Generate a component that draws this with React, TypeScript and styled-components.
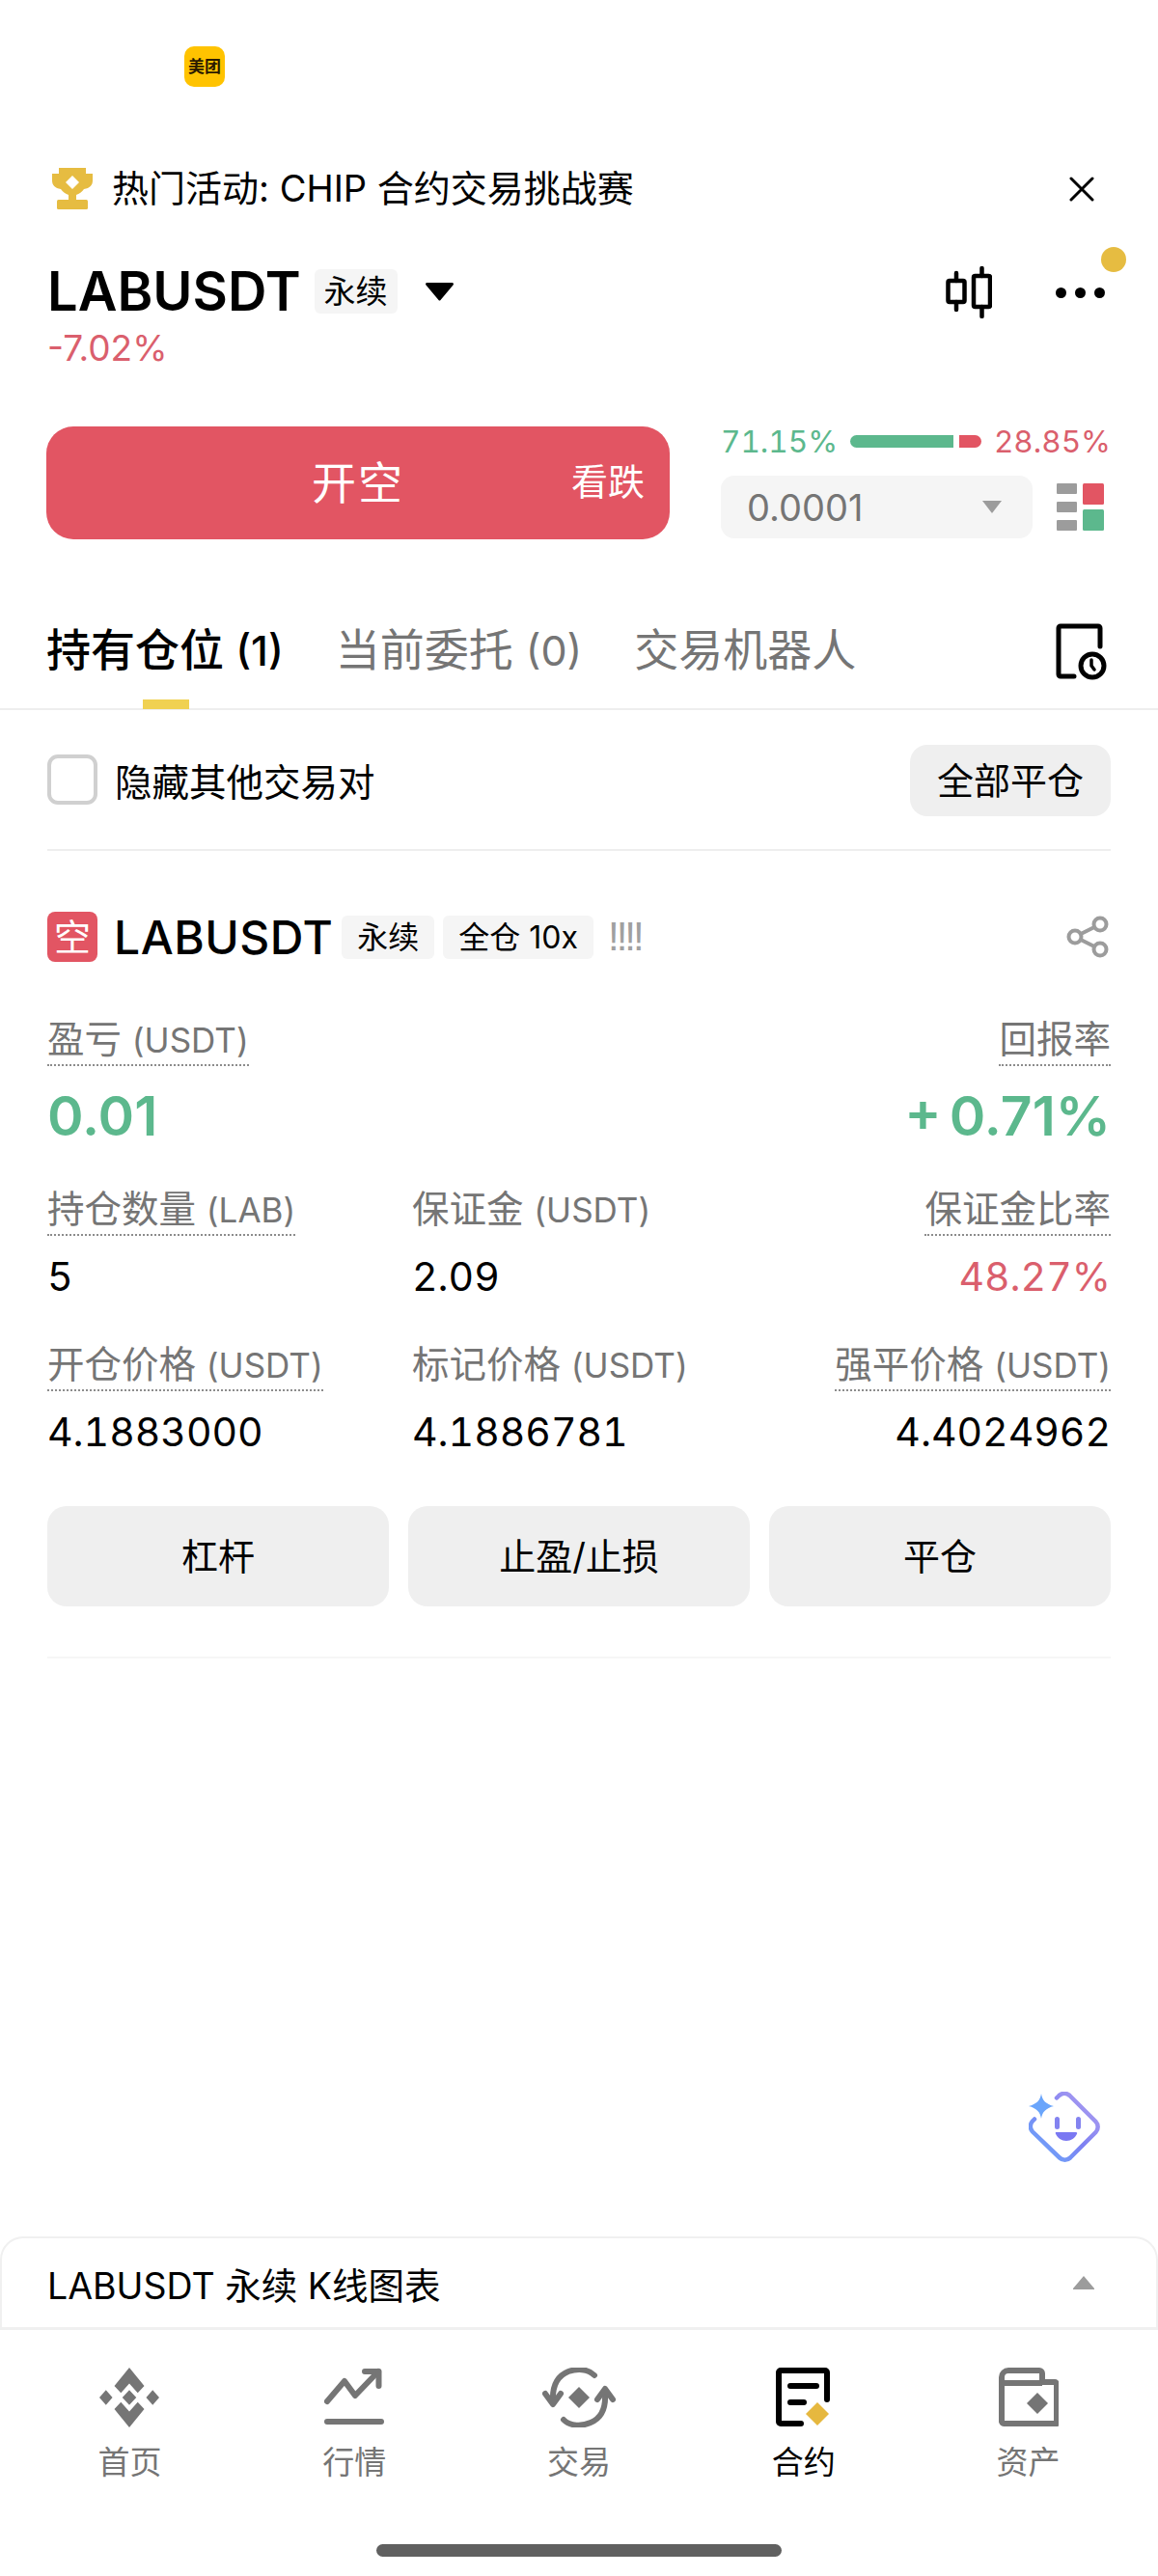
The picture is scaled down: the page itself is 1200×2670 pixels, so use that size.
import * as React from "react";
import styled, { createGlobalStyle } from "styled-components";

const GlobalStyle = createGlobalStyle`
    html, body {
        margin: 0;
        padding: 0;
        background: #fff;
    }
    body {
        font-family: "Inter", "Noto Sans CJK SC", sans-serif;
        color: #000;
    }
    * {
        box-sizing: border-box;
    }
`;

const GREEN = "#5cb88d";
const RED = "#e25563";
const RED_TEXT = "#da5f6d";
const GREY_TEXT = "#757575";
const ICON_GREY = "#9c9c9c";

const App: React.FC = () => {
    return (
        <>
            <GlobalStyle />
            <Page>
                <StatusBar>
                    <AppBadge>美团</AppBadge>
                </StatusBar>

                <PromoRow>
                    <TrophyIcon />
                    <PromoText>热门活动: CHIP 合约交易挑战赛</PromoText>
                    <CloseIcon />
                </PromoRow>

                <SymbolRow>
                    <SymbolBlock>
                        <SymbolLine>
                            <SymbolName>LABUSDT</SymbolName>
                            <Tag>永续</Tag>
                            <Caret viewBox="0 0 29 19">
                                <path d="M1.5 0h26a1.4 1.4 0 0 1 1 2.4L15.5 18a1.4 1.4 0 0 1-2 0L.5 2.4A1.4 1.4 0 0 1 1.5 0z" fill="#000" />
                            </Caret>
                        </SymbolLine>
                        <ChangeText>-7.02%</ChangeText>
                    </SymbolBlock>
                    <SymbolActions>
                        <CandleIcon />
                        <MoreWrap>
                            <MoreDot />
                            <MoreDot />
                            <MoreDot />
                            <NoticeDot />
                        </MoreWrap>
                    </SymbolActions>
                </SymbolRow>

                <TradeRow>
                    <SellButton>
                        <SellLabel>开空</SellLabel>
                        <SellHint>看跌</SellHint>
                    </SellButton>
                    <DepthColumn>
                        <RatioRow>
                            <RatioText $color={GREEN}>71.15%</RatioText>
                            <RatioBar>
                                <RatioGreen />
                                <RatioRed />
                            </RatioBar>
                            <RatioText $color={RED_TEXT}>28.85%</RatioText>
                        </RatioRow>
                        <PrecisionRow>
                            <PrecisionSelect>
                                <PrecisionValue>0.0001</PrecisionValue>
                                <SmallCaret viewBox="0 0 20 13">
                                    <path d="M0 0h20L10 13z" fill={ICON_GREY} />
                                </SmallCaret>
                            </PrecisionSelect>
                            <BookIcon />
                        </PrecisionRow>
                    </DepthColumn>
                </TradeRow>

                <TabBar>
                    <Tab $active>
                        持有仓位 <TabCount>(1)</TabCount>
                        <TabMarker />
                    </Tab>
                    <Tab>
                        当前委托 <TabCount>(0)</TabCount>
                    </Tab>
                    <Tab>交易机器人</Tab>
                    <HistoryIcon />
                </TabBar>

                <FilterRow>
                    <CheckLabel>
                        <CheckBox />
                        隐藏其他交易对
                    </CheckLabel>
                    <CloseAllButton>全部平仓</CloseAllButton>
                </FilterRow>

                <PositionCard>
                    <PositionHead>
                        <SideBadge>空</SideBadge>
                        <PositionName>LABUSDT</PositionName>
                        <PositionTag>永续</PositionTag>
                        <PositionTag>全仓 10x</PositionTag>
                        <Warnings>!!!!</Warnings>
                        <ShareIcon />
                    </PositionHead>

                    <PnlRow>
                        <Metric>
                            <MetricLabel $dotted>
                                盈亏 <Unit>(USDT)</Unit>
                            </MetricLabel>
                            <BigNumber>0.01</BigNumber>
                        </Metric>
                        <Metric $right>
                            <MetricLabel $dotted>回报率</MetricLabel>
                            <BigNumber>+ 0.71%</BigNumber>
                        </Metric>
                    </PnlRow>

                    <MetricGrid>
                        <Metric>
                            <MetricLabel $dotted>
                                持仓数量 <Unit>(LAB)</Unit>
                            </MetricLabel>
                            <MetricValue>5</MetricValue>
                        </Metric>
                        <Metric>
                            <MetricLabel>
                                保证金 <Unit>(USDT)</Unit>
                            </MetricLabel>
                            <MetricValue>2.09</MetricValue>
                        </Metric>
                        <Metric $right>
                            <MetricLabel $dotted>保证金比率</MetricLabel>
                            <MetricValue $color={RED_TEXT}>48.27%</MetricValue>
                        </Metric>
                        <Metric>
                            <MetricLabel $dotted>
                                开仓价格 <Unit>(USDT)</Unit>
                            </MetricLabel>
                            <MetricValue>4.1883000</MetricValue>
                        </Metric>
                        <Metric>
                            <MetricLabel>
                                标记价格 <Unit>(USDT)</Unit>
                            </MetricLabel>
                            <MetricValue>4.1886781</MetricValue>
                        </Metric>
                        <Metric $right>
                            <MetricLabel $dotted>
                                强平价格 <Unit>(USDT)</Unit>
                            </MetricLabel>
                            <MetricValue>4.4024962</MetricValue>
                        </Metric>
                    </MetricGrid>

                    <ActionRow>
                        <ActionButton>杠杆</ActionButton>
                        <ActionButton>止盈/止损</ActionButton>
                        <ActionButton>平仓</ActionButton>
                    </ActionRow>
                </PositionCard>

                <AssistantIcon />

                <Footer>
                    <ChartBar>
                        <ChartTitle>LABUSDT 永续 K线图表</ChartTitle>
                        <ChartCaret viewBox="0 0 22 14">
                            <path d="M11 0l11 13a.6.6 0 0 1-.5 1H.5a.6.6 0 0 1-.5-1z" fill={ICON_GREY} />
                        </ChartCaret>
                    </ChartBar>
                    <NavBar>
                        <NavItem>
                            <HomeIcon />
                            首页
                        </NavItem>
                        <NavItem>
                            <MarketIcon />
                            行情
                        </NavItem>
                        <NavItem>
                            <TradeIcon />
                            交易
                        </NavItem>
                        <NavItem $active>
                            <ContractIcon />
                            合约
                        </NavItem>
                        <NavItem>
                            <WalletIcon />
                            资产
                        </NavItem>
                    </NavBar>
                    <HomeIndicator />
                </Footer>
            </Page>
        </>
    );
};

const TrophyIcon = () => (
    <TrophySvg viewBox="0 0 42 43">
        <path
            d="M7 0h28v6h7v7c0 5-3 8-9 9-2 3-5 5-8 6v6H17v-6c-3-1-6-3-8-6-6-1-9-4-9-9V6h7z"
            fill="#e6bc41"
        />
        <rect x="5" y="33" width="32" height="10" rx="1.500" fill="#e6bc41" />
        <path d="M21 8l7 7-7 7-7-7z" fill="#fff" />
    </TrophySvg>
);

const CloseIcon = () => (
    <CloseSvg viewBox="0 0 26 26">
        <path d="M2 2l22 22M24 2L2 24" stroke="#000" strokeWidth="3" strokeLinecap="round" />
    </CloseSvg>
);

const CandleIcon = () => (
    <CandleSvg viewBox="0 0 48 54" fill="none" stroke="#000" strokeWidth="4.500" strokeLinecap="round" strokeLinejoin="round">
        <rect x="2.500" y="15" width="17" height="22" rx="1.500" />
        <path d="M11 7v8M11 37v8" />
        <rect x="29" y="10" width="17" height="32" rx="1.500" />
        <path d="M37.500 2v8M37.500 42v10" />
    </CandleSvg>
);

const BookIcon = () => (
    <BookSvg viewBox="0 0 49 49">
        <rect x="0" y="0" width="21" height="11" rx="1" fill={ICON_GREY} />
        <rect x="0" y="19" width="21" height="11" rx="1" fill={ICON_GREY} />
        <rect x="0" y="38" width="21" height="11" rx="1" fill={ICON_GREY} />
        <rect x="27" y="0" width="22" height="22" rx="1.500" fill={RED} />
        <rect x="27" y="27" width="22" height="22" rx="1.500" fill={GREEN} />
    </BookSvg>
);

const HistoryIcon = () => (
    <HistorySvg viewBox="0 0 54 60" fill="none" stroke="#000" strokeWidth="5" strokeLinecap="round" strokeLinejoin="round">
        <path d="M20 56H6a2 2 0 0 1-2-2V6a2 2 0 0 1 2-2h39a2 2 0 0 1 2 2v19" />
        <circle cx="39" cy="45" r="12" />
        <path d="M38 39v6l3 4" strokeWidth="3.500" />
    </HistorySvg>
);

const ShareIcon = () => (
    <ShareSvg viewBox="0 0 44 44" fill="none" stroke={ICON_GREY} strokeWidth="4">
        <circle cx="35" cy="9" r="6.500" />
        <circle cx="9" cy="22" r="6.500" />
        <circle cx="35" cy="35" r="6.500" />
        <path d="M15 19l14-7M15 25l14 7" />
    </ShareSvg>
);

const AssistantIcon = () => (
    <AssistantSvg viewBox="0 0 74 74" fill="none">
        <defs>
            <linearGradient id="botRing" x1="0" y1="1" x2="1" y2="0">
                <stop offset="0" stopColor="#6aaefc" />
                <stop offset="0.5" stopColor="#7d80f2" />
                <stop offset="1" stopColor="#b6a3f0" />
            </linearGradient>
        </defs>
        <path
            d="M29 6.500l2.500-2.500a8 8 0 0 1 11 0l27 27a8 8 0 0 1 0 11L43 68.500a8 8 0 0 1-11 0L4 41.500a8 8 0 0 1 0-11l2-2"
            stroke="url(#botRing)"
            strokeWidth="4.500"
            strokeLinecap="round"
        />
        <path d="M13 2c1 7 5 11 13 13-8 2-12 6-13 13-1-7-5-11-13-13 8-2 12-6 13-13z" fill="#6aa5fb" />
        <rect x="27" y="26" width="5" height="13" rx="2.500" fill="#8383f0" />
        <rect x="49" y="26" width="5" height="13" rx="2.500" fill="#8383f0" />
        <path d="M28 42h21c1 0 1.500.8 1 1.800C48 48 44 51 39 51s-9-3-11-7.200c-.5-1 0-1.800 0-1.800z" fill="#7a78f2" />
    </AssistantSvg>
);

const HomeIcon = () => (
    <NavSvg viewBox="0 0 64 64" fill={GREY_TEXT}>
        <path d="M32 0l16 19.500-7 7.500-9-10-9 10-7-7.500z" />
        <path d="M32 64L16 44.500l7-7.500 9 10 9-10 7 7.500z" />
        <path d="M32 24l7.500 8-7.500 8-7.500-8z" />
        <path d="M7 24l7 8-7 8-7-8z" />
        <path d="M57 24l7 8-7 8-7-8z" />
    </NavSvg>
);

const MarketIcon = () => (
    <NavSvg viewBox="0 0 62 62" fill="none" stroke={GREY_TEXT} strokeWidth="6" strokeLinecap="round" strokeLinejoin="round">
        <path d="M3 35l18-21 11 15 24-25" />
        <path d="M42 4h14.500v15" />
        <path d="M3 56h56" />
    </NavSvg>
);

const TradeIcon = () => (
    <NavSvg viewBox="0 0 76 62" fill="none" stroke={GREY_TEXT} strokeWidth="6" strokeLinecap="round" strokeLinejoin="round">
        <path d="M54 8C47 1 36 1 27 4 17 8 10 17 11 35" />
        <path d="M3 27l8 11 8-11" />
        <path d="M22 54c7 7 19 7 28 3 10-4 16-13 15-30" />
        <path d="M57 33l8-11 8 11" />
        <path d="M38 20l11 11-11 11-11-11z" fill={GREY_TEXT} stroke="none" />
    </NavSvg>
);

const ContractIcon = () => (
    <NavSvg viewBox="0 0 62 62" fill="none" stroke="#000" strokeWidth="6" strokeLinecap="round" strokeLinejoin="round">
        <path d="M28 58H7a2 2 0 0 1-2-2V5a2 2 0 0 1 2-2h46a2 2 0 0 1 2 2v28" />
        <path d="M17 19h27M17 36h14" />
        <path d="M45 36l12 12-12 12-12-12z" fill="#e6b83f" stroke="none" />
    </NavSvg>
);

const WalletIcon = () => (
    <NavSvg viewBox="0 0 62 62" fill="none" stroke={GREY_TEXT} strokeWidth="6" strokeLinejoin="round">
        <path d="M3 56V10a7 7 0 0 1 7-7h32a3 3 0 0 1 3 3v9h13a2 2 0 0 1 2 2v41H6a3 3 0 0 1-3-2z" />
        <path d="M3 16h42" />
        <path d="M40 26l11 11-11 11-11-11z" fill={GREY_TEXT} stroke="none" />
    </NavSvg>
);

const Page = styled.div`
    position: relative;
    width: 1200px;
    height: 2670px;
    display: flex;
    flex-direction: column;
    background: #fff;
    overflow: hidden;
`;

const StatusBar = styled.div`
    height: 174px;
    padding: 48px 0 0 191px;
`;
const AppBadge = styled.div`
    width: 42px;
    height: 42px;
    border-radius: 10px;
    background: #ffc300;
    color: #2a1a00;
    font-size: 17px;
    font-weight: 700;
    line-height: 42px;
    text-align: center;
    white-space: nowrap;
`;

const PromoRow = styled.div`
    display: flex;
    align-items: center;
    height: 43px;
    padding: 0 66px 0 54px;
`;
const TrophySvg = styled.svg`
    width: 42px;
    height: 43px;
    flex-shrink: 0;
`;
const PromoText = styled.div`
    flex: 1;
    margin-left: 20px;
    font-size: 38px;
    line-height: 43px;
    white-space: nowrap;
`;
const CloseSvg = styled.svg`
    width: 26px;
    height: 26px;
`;

const SymbolRow = styled.div`
    display: flex;
    justify-content: space-between;
    padding: 62px 55px 0 49px;
`;
const SymbolBlock = styled.div`
    display: flex;
    flex-direction: column;
`;
const SymbolLine = styled.div`
    display: flex;
    align-items: center;
    height: 46px;
`;
const SymbolName = styled.div`
    font-size: 56px;
    font-weight: 600;
    line-height: 46px;
`;
const Tag = styled.div`
    margin-left: 14px;
    width: 86px;
    height: 46px;
    border-radius: 6px;
    background: #f5f5f5;
    font-size: 33px;
    line-height: 46px;
    text-align: center;
`;
const Caret = styled.svg`
    width: 29px;
    height: 19px;
    margin-left: 29px;
`;
const ChangeText = styled.div`
    margin-top: 16px;
    font-size: 37px;
    line-height: 40px;
    color: ${RED_TEXT};
`;
const SymbolActions = styled.div`
    display: flex;
    align-items: center;
    gap: 66px;
    height: 60px;
    margin-top: -6px;
`;
const CandleSvg = styled.svg`
    width: 48px;
    height: 54px;
`;
const MoreWrap = styled.div`
    position: relative;
    display: flex;
    gap: 9px;
`;
const MoreDot = styled.span`
    width: 11px;
    height: 11px;
    border-radius: 50%;
    background: #000;
`;
const NoticeDot = styled.span`
    position: absolute;
    top: -42px;
    right: -22px;
    width: 26px;
    height: 26px;
    border-radius: 50%;
    background: #e6bc41;
`;

const TradeRow = styled.div`
    display: flex;
    justify-content: space-between;
    padding: 61px 49px 0 48px;
`;
const SellButton = styled.div`
    position: relative;
    width: 646px;
    height: 117px;
    padding-bottom: 8px;
    border-radius: 28px;
    background: ${RED};
    color: #fff;
    display: flex;
    align-items: center;
    justify-content: center;
`;
const SellLabel = styled.div`
    font-size: 46px;
    letter-spacing: 2px;
`;
const SellHint = styled.div`
    position: absolute;
    right: 26px;
    font-size: 38px;
`;
const DepthColumn = styled.div`
    width: 404px;
    display: flex;
    flex-direction: column;
`;
const RatioRow = styled.div`
    display: flex;
    align-items: center;
    height: 32px;
    margin-top: -1px;
`;
const RatioText = styled.div<{ $color: string }>`
    font-size: 31.500px;
    font-variant-numeric: tabular-nums;
    color: ${(p) => p.$color};
    white-space: nowrap;
`;
const RatioBar = styled.div`
    flex: 1;
    display: flex;
    gap: 6px;
    height: 13px;
    margin: 0 13px;
`;
const RatioGreen = styled.div`
    flex: 114;
    background: ${GREEN};
    border-radius: 7px 0 0 7px;
`;
const RatioRed = styled.div`
    flex: 25;
    background: ${RED};
    border-radius: 0 7px 7px 0;
`;
const PrecisionRow = styled.div`
    display: flex;
    align-items: center;
    justify-content: space-between;
    margin-top: 20px;
    padding-right: 7px;
`;
const PrecisionSelect = styled.div`
    width: 323px;
    height: 65px;
    padding: 0 32px 0 27px;
    border-radius: 14px;
    background: #f5f5f5;
    display: flex;
    align-items: center;
    justify-content: space-between;
`;
const PrecisionValue = styled.div`
    font-size: 38px;
    color: ${GREY_TEXT};
`;
const SmallCaret = styled.svg`
    width: 20px;
    height: 13px;
`;
const BookSvg = styled.svg`
    width: 49px;
    height: 49px;
`;

const TabBar = styled.div`
    position: relative;
    display: flex;
    align-items: center;
    gap: 54px;
    height: 177px;
    padding: 64px 53px 0 48px;
    border-bottom: 2px solid #eee;
`;
const Tab = styled.div<{ $active?: boolean }>`
    position: relative;
    height: 113px;
    padding-top: 25px;
    font-size: 46px;
    line-height: 52px;
    white-space: nowrap;
    font-weight: ${(p) => (p.$active ? 500 : 400)};
    color: ${(p) => (p.$active ? "#000" : GREY_TEXT)};
`;
const TabCount = styled.span`
    font-size: 43px;
`;
const TabMarker = styled.span`
    position: absolute;
    left: 100px;
    bottom: 0;
    width: 48px;
    height: 10px;
    background: #f0d152;
`;
const HistorySvg = styled.svg`
    width: 54px;
    height: 60px;
    margin: -8px 0 0 auto;
`;

const FilterRow = styled.div`
    display: flex;
    align-items: center;
    justify-content: space-between;
    margin: 0 49px 0 49px;
    height: 146px;
    border-bottom: 2px solid #eee;
`;
const CheckLabel = styled.div`
    display: flex;
    align-items: center;
    gap: 18px;
    font-size: 38.500px;
`;
const CheckBox = styled.span`
    width: 52px;
    height: 52px;
    border: 4px solid #d0d0d0;
    border-radius: 11px;
`;
const CloseAllButton = styled.div`
    width: 208px;
    height: 74px;
    margin-top: 2px;
    border-radius: 18px;
    background: #efefef;
    font-size: 38px;
    line-height: 74px;
    text-align: center;
`;

const PositionCard = styled.div`
    margin: 0 49px;
    padding: 63px 0 52px;
    border-bottom: 2px solid #f6f6f6;
`;
const PositionHead = styled.div`
    display: flex;
    align-items: center;
    height: 52px;
`;
const SideBadge = styled.div`
    width: 52px;
    height: 52px;
    border-radius: 8px;
    background: ${RED};
    color: #fff;
    font-size: 38px;
    line-height: 52px;
    text-align: center;
`;
const PositionName = styled.div`
    margin-left: 17px;
    font-size: 48px;
    font-weight: 500;
    letter-spacing: 0.5px;
`;
const PositionTag = styled.div`
    margin-left: 9px;
    padding: 0 16px;
    height: 45px;
    border-radius: 6px;
    background: #f5f5f5;
    font-size: 32px;
    line-height: 45px;
    white-space: nowrap;
`;
const Warnings = styled.div`
    margin-left: 15px;
    font-family: "Liberation Sans", sans-serif;
    font-size: 42px;
    letter-spacing: -3px;
    color: #a0a0a0;
`;
const ShareSvg = styled.svg`
    width: 44px;
    height: 44px;
    margin: 0 2px 0 auto;
`;

const PnlRow = styled.div`
    display: flex;
    justify-content: space-between;
    margin-top: 54px;
`;
const Metric = styled.div<{ $right?: boolean }>`
    display: flex;
    flex-direction: column;
    align-items: ${(p) => (p.$right ? "flex-end" : "flex-start")};
`;
const MetricLabel = styled.div<{ $dotted?: boolean }>`
    font-size: 38.500px;
    line-height: 52px;
    height: 54px;
    color: ${GREY_TEXT};
    white-space: nowrap;
    border-bottom: 2px ${(p) => (p.$dotted ? "dotted #8c8c8c" : "solid transparent")};
`;
const Unit = styled.span`
    font-size: 35px;
`;
const BigNumber = styled.div`
    margin-top: 19px;
    font-size: 57px;
    word-spacing: -6px;
    line-height: 66px;
    font-weight: 600;
    color: ${GREEN};
`;
const MetricGrid = styled.div`
    display: grid;
    grid-template-columns: 378px 1fr 1fr;
    row-gap: 41px;
    margin-top: 37px;
`;
const MetricValue = styled.div<{ $color?: string }>`
    margin-top: 18px;
    font-size: 41px;
    font-variant-numeric: tabular-nums;
    line-height: 48px;
    color: ${(p) => p.$color || "#000"};
`;

const ActionRow = styled.div`
    display: grid;
    grid-template-columns: repeat(3, 1fr);
    gap: 20px;
    margin-top: 53px;
`;
const ActionButton = styled.div`
    height: 104px;
    border-radius: 20px;
    background: #efefef;
    font-size: 38px;
    line-height: 104px;
    text-align: center;
`;

const AssistantSvg = styled.svg`
    position: absolute;
    left: 1066px;
    top: 2168px;
    width: 74px;
    height: 74px;
`;

const Footer = styled.div`
    margin-top: auto;
    display: flex;
    flex-direction: column;
`;
const ChartBar = styled.div`
    height: 97px;
    padding: 0 64px 0 47px;
    border: 2px solid #f0f0f0;
    border-bottom-width: 3px;
    border-radius: 24px 24px 0 0;
    display: flex;
    align-items: center;
    justify-content: space-between;
`;
const ChartTitle = styled.div`
    font-size: 37.500px;
`;
const ChartCaret = styled.svg`
    width: 22px;
    height: 14px;
`;
const NavBar = styled.div`
    display: grid;
    grid-template-columns: repeat(5, 1fr);
    padding: 39px 18px 0;
`;
const NavItem = styled.div<{ $active?: boolean }>`
    display: flex;
    flex-direction: column;
    align-items: center;
    gap: 16px;
    font-size: 33px;
    line-height: 40px;
    color: ${(p) => (p.$active ? "#000" : GREY_TEXT)};
`;
const NavSvg = styled.svg`
    height: 62px;
    width: auto;
`;
const HomeIndicator = styled.div`
    width: 420px;
    height: 13px;
    margin: 65px auto 20px;
    border-radius: 7px;
    background: #606060;
`;

export default App;
